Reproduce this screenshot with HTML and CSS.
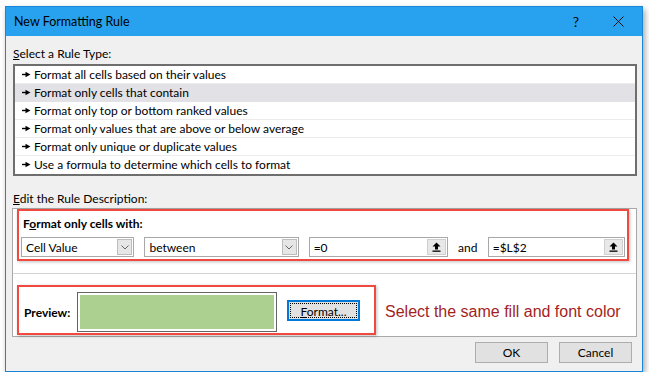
FILE: index.html
```html
<!DOCTYPE html>
<html lang="en">
<head>
  <meta charset="UTF-8">
  <title>New Formatting Rule</title>
  <link rel="stylesheet" href="styles.css">
</head>
<body>
  <div class="dialog">
    <div class="titlebar">
      <span class="title">New Formatting Rule</span>
      <span class="help">?</span>
      <svg class="close" width="11" height="11" viewBox="0 0 11 11"><path d="M0.5 0.5L10.5 10.5M10.5 0.5L0.5 10.5" stroke="#111" stroke-width="1"/></svg>
    </div>

    <div class="content">
      <div class="label"><u>S</u>elect a Rule Type:</div>
      <ul class="rule-list">
        <li><svg class="pointer" width="9" height="7" viewBox="0 0 9 7"><path d="M0 3.5H4" stroke="#000" stroke-width="1.4"/><path d="M3.5 0.8L8.5 3.5L3.5 6.2Z" fill="#000"/></svg>Format all cells based on their values</li>
        <li class="selected"><svg class="pointer" width="9" height="7" viewBox="0 0 9 7"><path d="M0 3.5H4" stroke="#000" stroke-width="1.4"/><path d="M3.5 0.8L8.5 3.5L3.5 6.2Z" fill="#000"/></svg>Format only cells that contain</li>
        <li><svg class="pointer" width="9" height="7" viewBox="0 0 9 7"><path d="M0 3.5H4" stroke="#000" stroke-width="1.4"/><path d="M3.5 0.8L8.5 3.5L3.5 6.2Z" fill="#000"/></svg>Format only top or bottom ranked values</li>
        <li><svg class="pointer" width="9" height="7" viewBox="0 0 9 7"><path d="M0 3.5H4" stroke="#000" stroke-width="1.4"/><path d="M3.5 0.8L8.5 3.5L3.5 6.2Z" fill="#000"/></svg>Format only values that are above or below average</li>
        <li><svg class="pointer" width="9" height="7" viewBox="0 0 9 7"><path d="M0 3.5H4" stroke="#000" stroke-width="1.4"/><path d="M3.5 0.8L8.5 3.5L3.5 6.2Z" fill="#000"/></svg>Format only unique or duplicate values</li>
        <li><svg class="pointer" width="9" height="7" viewBox="0 0 9 7"><path d="M0 3.5H4" stroke="#000" stroke-width="1.4"/><path d="M3.5 0.8L8.5 3.5L3.5 6.2Z" fill="#000"/></svg>Use a formula to determine which cells to format</li>
      </ul>

      <div class="label label-edit"><u>E</u>dit the Rule Description:</div>
      <div class="panel">
        <div class="highlight criteria">
          <div class="group-title">F<u>o</u>rmat only cells with:</div>
          <div class="criteria-row">
            <div class="combo combo-type">
              <span>Cell Value</span>
              <span class="drop"><svg width="8" height="5" viewBox="0 0 8 5"><path d="M0.5 0.5L4 4L7.5 0.5" fill="none" stroke="#666" stroke-width="1"/></svg></span>
            </div>
            <div class="combo combo-op">
              <span>between</span>
              <span class="drop"><svg width="8" height="5" viewBox="0 0 8 5"><path d="M0.5 0.5L4 4L7.5 0.5" fill="none" stroke="#666" stroke-width="1"/></svg></span>
            </div>
            <div class="refedit ref-first">
              <span>=0</span>
              <span class="collapse"><svg width="9" height="10" viewBox="0 0 9 10"><path d="M4.5 0.5L8.5 4.5H6V7.5H3V4.5H0.5Z" fill="#000"/><rect x="0.5" y="8.5" width="8" height="1.3" fill="#000"/></svg></span>
            </div>
            <span class="and">and</span>
            <div class="refedit ref-second">
              <span>=$L$2</span>
              <span class="collapse"><svg width="9" height="10" viewBox="0 0 9 10"><path d="M4.5 0.5L8.5 4.5H6V7.5H3V4.5H0.5Z" fill="#000"/><rect x="0.5" y="8.5" width="8" height="1.3" fill="#000"/></svg></span>
            </div>
          </div>
        </div>

        <div class="separator"></div>

        <div class="preview-row">
          <div class="highlight preview">
            <span class="preview-label">Preview:</span>
            <div class="swatch"><div class="swatch-fill"></div></div>
            <button class="btn btn-format"><span class="focus"><u>F</u>ormat...</span></button>
          </div>
          <span class="note">Select the same fill and font color</span>
        </div>
      </div>

      <div class="actions">
        <button class="btn">OK</button>
        <button class="btn">Cancel</button>
      </div>
    </div>
  </div>
</body>
</html>
```

FILE: styles.css
```css
body {
  margin: 0;
  background: #fff;
  font-family: Lato, "Noto Sans", sans-serif;
  font-size: 12px;
  color: #000;
}
.dialog {
  margin: 6px 0 0 5px;
  width: 636px;
  height: 364px;
  border: 1px solid #1a86d9;
  background: #f0f0f0;
  box-shadow: 2px 3px 6px rgba(0,0,0,0.35);
  display: flex;
  flex-direction: column;
}
.titlebar {
  height: 29px;
  background: #28a2ee;
  display: flex;
  align-items: center;
  padding-left: 8px;
}
.title {
  flex: 1;
  font-size: 12.5px;
}
.help {
  font-size: 14px;
  margin-right: 34px;
}
.close {
  margin-right: 18px;
}
.content {
  padding: 10px 5px 0 7px;
}
.label {
  height: 16px;
  line-height: 16px;
  margin-bottom: 2px;
}
.label-edit {
  margin-top: 15px;
  margin-bottom: 1px;
}
.rule-list {
  list-style: none;
  margin: 0;
  padding: 0;
  background: #fff;
  border: 2px solid #6e6e6e;
}
.rule-list li {
  height: 17px;
  line-height: 17px;
  border-bottom: 1px solid #ececec;
  padding-left: 7px;
  display: flex;
  align-items: center;
}
.rule-list li:last-child {
  border-bottom-color: #fff;
}
.rule-list li.selected {
  background: #e1e1e6;
  border-bottom-color: #e1e1e6;
}
.pointer {
  margin-right: 3px;
}
.panel {
  background: #fff;
  border: 1px solid #a9a9a9;
  height: 127px;
  margin-left: -1px;
  padding: 0 7px 0 4px;
}
.highlight {
  border: 2px solid #f04a40;
  box-shadow: 1px 1px 3px rgba(0,0,0,0.25);
}
.criteria {
  padding: 5px 2px 2px 2px;
}
.group-title {
  font-weight: bold;
  height: 16px;
  line-height: 16px;
  padding-left: 2px;
  margin-bottom: 5px;
}
.criteria-row {
  display: flex;
  align-items: center;
  height: 20px;
}
.combo, .refedit {
  height: 18px;
  border: 1px solid #a8a8a8;
  background: #fff;
  display: flex;
  align-items: center;
  justify-content: space-between;
  padding-left: 4px;
}
.combo-type {
  width: 108px;
  margin-right: 10px;
}
.combo-op {
  width: 149px;
  margin-right: 10px;
}
.ref-first {
  width: 134px;
}
.ref-second {
  width: 132px;
}
.drop, .collapse {
  width: 15px;
  height: 16px;
  margin-right: 1px;
  background: #e6e6e6;
  border: 1px solid #bdbdbd;
  box-sizing: border-box;
  display: flex;
  align-items: center;
  justify-content: center;
}
.collapse {
  width: 19px;
  background: #e8e8e8;
  border-color: #d0d0d0;
}
.and {
  width: 40px;
  text-align: center;
}
.separator {
  height: 1px;
  background: #d4d4d4;
  margin: 12px -7px 11px -4px;
}
.preview-row {
  display: flex;
  align-items: center;
}
.preview {
  width: 355px;
  display: flex;
  align-items: center;
  padding-top: 4px;
  height: 42px;
}
.preview-label {
  font-weight: bold;
  width: 53px;
  padding-left: 5px;
}
.swatch {
  width: 200px;
  height: 40px;
  border: 1px solid #646464;
  padding: 2px;
  box-sizing: border-box;
  margin-right: 10px;
}
.swatch-fill {
  height: 100%;
  background: #acd08f;
}
.btn {
  font-family: Lato, "Noto Sans", sans-serif;
  font-size: 12px;
  width: 73px;
  height: 21px;
  padding: 0;
  background: #e1e1e1;
  border: 1px solid #adadad;
  color: #000;
}
.btn-format {
  border: 2px solid #0078d7;
  padding: 1px;
  margin-bottom: 3px;
}
.focus {
  display: block;
  height: 100%;
  line-height: 15px;
  border: 1px dotted #000;
  box-sizing: border-box;
}
.note {
  margin-left: 9px;
  margin-top: 3px;
  font-family: "Liberation Sans", Arial, sans-serif;
  font-size: 16px;
  color: #a31f1f;
}
.actions {
  display: flex;
  justify-content: flex-end;
  gap: 11px;
  margin-top: 5px;
  padding-right: 5px;
}
```
